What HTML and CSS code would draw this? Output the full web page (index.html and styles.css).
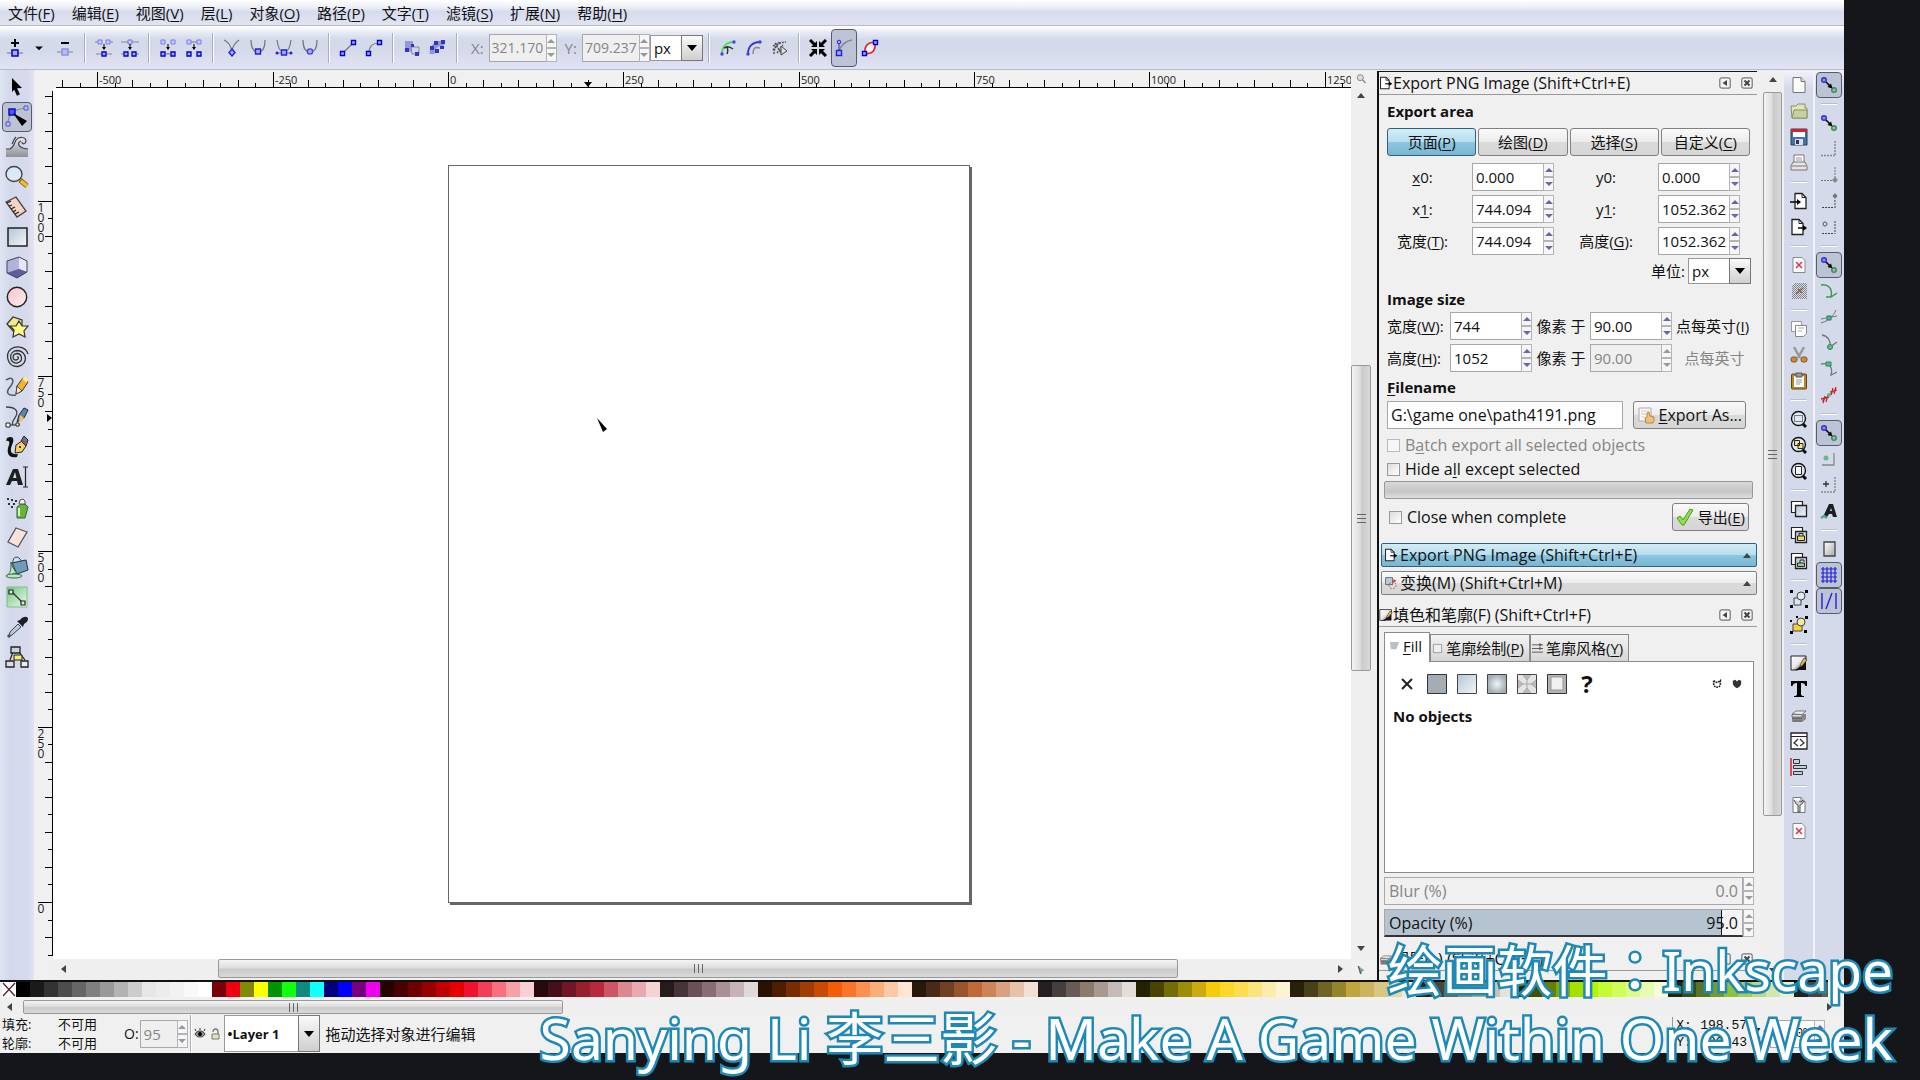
FILE: index.html
```html
<!DOCTYPE html>
<html lang="zh">
<head>
<meta charset="UTF-8" />
<meta name="viewport" content="width=device-width, initial-scale=1" />
<title>Inkscape</title>
<link rel="stylesheet" href="styles.css">
</head>
<body>

<!-- Icon sprite -->
<svg class="sprite" aria-hidden="true">
  <defs>
    <linearGradient id="steel" x1="0" y1="0" x2="1" y2="1"><stop offset="0" stop-color="#b4c6d4"/><stop offset="1" stop-color="#f2f6fa"/></linearGradient>
    <linearGradient id="pink" x1="0" y1="0" x2="1" y2="1"><stop offset="0" stop-color="#ffc0c4"/><stop offset="1" stop-color="#fff0f0"/></linearGradient>
    <linearGradient id="green" x1="0" y1="0" x2="1" y2="1"><stop offset="0" stop-color="#6fc47c"/><stop offset="1" stop-color="#effbef"/></linearGradient>
    <linearGradient id="gray" x1="0" y1="0" x2="0" y2="1"><stop offset="0" stop-color="#e4e6ea"/><stop offset="1" stop-color="#8d9197"/></linearGradient>
    <linearGradient id="ink" x1="0" y1="0" x2="1" y2="1"><stop offset="0" stop-color="#fff"/><stop offset=".5" stop-color="#e8e8e8"/><stop offset="1" stop-color="#111"/></linearGradient>
    <linearGradient id="silver" x1="0" y1="0" x2="1" y2="1"><stop offset="0" stop-color="#fff"/><stop offset="1" stop-color="#aaa"/></linearGradient>
    <radialGradient id="glow"><stop offset="0" stop-color="#f0f6f8"/><stop offset="1" stop-color="#a4adb4"/></radialGradient>
    <pattern id="dots" width="2" height="2" patternUnits="userSpaceOnUse"><path d="M0 0h1v1H0zM1 1h1v1H1z" fill="#888"/></pattern>
  </defs>

  <symbol id="i-snap" viewBox="0 0 18 18">
    <circle cx="4" cy="4" r="2.3" fill="#8e8ef0" stroke="#3030c8" stroke-width="1.4"/>
    <circle cx="14" cy="14" r="2.3" fill="#8fc0a0" stroke="#3f8a5c" stroke-width="1.4"/>
    <path d="M6 6l4 4" stroke="#000" stroke-width="1.6"/><path d="M12.500 12.500l-5-1.500 3.500-3.500z"/>
  </symbol>
  <symbol id="i-page" viewBox="0 0 18 18"><path d="M3 1.500h8l4 4v11H3z" fill="#fbfbf8" stroke="#777"/><path d="M11 1.500v4h4" fill="#ddd" stroke="#777"/></symbol>
  <symbol id="i-export" viewBox="0 0 18 18"><path d="M2 1.500h7l4 4v11H2z" fill="#fff" stroke="#222" stroke-width="1.300"/><path d="M9 1.500v4h4" fill="none" stroke="#222"/><path d="M8 10h7" stroke="#000" stroke-width="1.500"/><path d="M13 7l4 3-4 3z"/></symbol>
  <symbol id="i-import" viewBox="0 0 18 18"><path d="M5 1.500h7l4 4v11H5z" fill="#fff" stroke="#222" stroke-width="1.300"/><path d="M12 1.500v4h4" fill="none" stroke="#222"/><path d="M0 10h8" stroke="#000" stroke-width="1.500"/><path d="M7 7l4 3-4 3z"/></symbol>
  <symbol id="i-pagex" viewBox="0 0 18 18"><path d="M3 1.500h9l3 3v12H3z" fill="#fff" stroke="#888"/><path d="M6 6l6 6M12 6l-6 6" stroke="#e0354b" stroke-width="1.600"/></symbol>
  <symbol id="i-lens" viewBox="0 0 18 18"><path d="M12 13l4 4" stroke="#111" stroke-width="3"/><circle cx="8.500" cy="8.500" r="7" fill="#dfe9ef" stroke="#111" stroke-width="1.400"/></symbol>
  <symbol id="i-fill" viewBox="0 0 18 18"><path d="M1 2h15v3L8 16H1z" fill="url(#ink)" stroke="#222"/><path d="M16 3v13H4c5-1 9-6 12-13z" fill="#111"/><path d="M14 4l3 2-5 6-2 1 .5-2.500z" fill="#d8c04a" stroke="#222" stroke-width=".6"/></symbol>
  <symbol id="i-dup" viewBox="0 0 18 18"><path d="M1.500 1.500h11v11h-11z" fill="#fff" stroke="#222" stroke-width="1.200"/><path d="M5.500 5.500h11v11h-11z" fill="url(#steel)" stroke="#222" stroke-width="1.300"/></symbol>
  <symbol id="i-transform" viewBox="0 0 18 18"><path d="M2 2h9v9H2z" fill="#b9cbd8" stroke="#555"/><path d="M12 4l4 2-4 3z" fill="#d33"/><circle cx="11" cy="12" r="4.500" fill="none" stroke="#a33" stroke-dasharray="2 2"/></symbol>
  <symbol id="i-layers" viewBox="0 0 18 18"><path d="M2 11l4-3h10v5l-4 3H2z" fill="#888"/><path d="M2 8l4-3h10l-4 3.500z" fill="#eee" stroke="#777"/><path d="M2 8.500h10v2.500H2z" fill="#ddd" stroke="#777"/><path d="M2 12.500h10M3 15h9" stroke="#666"/></symbol>
  <symbol id="i-dockmin" viewBox="0 0 12 12"><rect x=".8" y=".8" width="10.400" height="10.400" rx="2" fill="#f4f4f4" stroke="#777" stroke-width="1.200"/><path d="M8 3v6L3.500 6z" fill="#444"/></symbol>
  <symbol id="i-dockclose" viewBox="0 0 12 12"><rect x=".8" y=".8" width="10.400" height="10.400" rx="2" fill="#f4f4f4" stroke="#777" stroke-width="1.200"/><path d="M3.500 3.500l5 5M8.500 3.500l-5 5" stroke="#444" stroke-width="2"/></symbol>
</svg>

<div class="app">

  <nav class="menubar">
    <a href="#">文件(<u>F</u>)</a>
    <a href="#">编辑(<u>E</u>)</a>
    <a href="#">视图(<u>V</u>)</a>
    <a href="#">层(<u>L</u>)</a>
    <a href="#">对象(<u>O</u>)</a>
    <a href="#">路径(<u>P</u>)</a>
    <a href="#">文字(<u>T</u>)</a>
    <a href="#">滤镜(<u>S</u>)</a>
    <a href="#">扩展(<u>N</u>)</a>
    <a href="#">帮助(<u>H</u>)</a>
  </nav>

  <!-- Node tool controls -->
  <div class="toolbar">
    <button class="tb" aria-label="Insert node"><svg viewBox="0 0 18 18"><path d="M9 0v8M5 4h8" stroke="#000" stroke-width="2"/><path d="M1 14h16" stroke="#777"/><path d="M6 11h6v6H6z" fill="#aaf" stroke="#00c" stroke-width="1.500"/></svg></button>
    <button class="tb narrow" aria-label="Insert options"><svg viewBox="0 0 18 18"><path d="M4 7h10l-5 5z"/></svg></button>
    <button class="tb wide" aria-label="Delete node"><svg viewBox="0 0 18 18"><path d="M5 4h8" stroke="#000" stroke-width="2"/><path d="M1 13h16" stroke="#888"/><path d="M6 10h6v6H6z" fill="#b9bdf4" stroke="#8890e8" stroke-width="1.500"/></svg></button>
    <i class="vsep"></i>
    <button class="tb" aria-label="Join nodes"><svg viewBox="0 0 18 18"><path d="M0 3h6M12 3h6M1 15h16" stroke="#888"/><path d="M3 1h4v4H3zM11 1h4v4h-4z" fill="#ccf" stroke="#77e"/><path d="M9 5v5" stroke="#000"/><path d="M7 8l2 3 2-3z"/><path d="M7 13h4v4H7z" fill="#aaf" stroke="#00c" stroke-width="1.300"/></svg></button>
    <button class="tb" aria-label="Break path"><svg viewBox="0 0 18 18"><path d="M0 3h18M0 15h5M13 15h5" stroke="#888"/><path d="M7 1h4v4H7z" fill="#ccf" stroke="#77e"/><path d="M9 5v5" stroke="#000"/><path d="M7 8l2 3 2-3z"/><path d="M3 13h4v4H3zM11 13h4v4h-4z" fill="#aaf" stroke="#00c" stroke-width="1.300"/></svg></button>
    <i class="vsep"></i>
    <button class="tb" aria-label="Join with segment"><svg viewBox="0 0 18 18"><path d="M3 15h12" stroke="#777"/><path d="M2 1h4v4H2zM12 1h4v4h-4z" fill="#ccf" stroke="#77e"/><path d="M9 5v5" stroke="#000"/><path d="M7 8l2 3 2-3z"/><path d="M2 13h4v4H2zM12 13h4v4h-4z" fill="#aaf" stroke="#00c" stroke-width="1.300"/></svg></button>
    <button class="tb" aria-label="Delete segment"><svg viewBox="0 0 18 18"><path d="M3 3h12" stroke="#777"/><path d="M2 1h4v4H2zM12 1h4v4h-4z" fill="#ccf" stroke="#77e"/><path d="M9 5v5" stroke="#000"/><path d="M7 8l2 3 2-3z"/><path d="M2 13h4v4H2zM12 13h4v4h-4z" fill="#aaf" stroke="#00c" stroke-width="1.300"/></svg></button>
    <i class="vsep"></i>
    <button class="tb" aria-label="Corner"><svg viewBox="0 0 18 18"><path d="M1 1c5 2 7 6 8 12 0-6 3-9 7-12" fill="none" stroke="#777" stroke-width="1.200"/><path d="M9 10l3 3.500-3 3.500-3-3.500z" fill="#aaf" stroke="#22d" stroke-width="1.400"/></svg></button>
    <button class="tb" aria-label="Smooth"><svg viewBox="0 0 18 18"><path d="M2 1c0 8 3 12 7 12s7-4 7-12" fill="none" stroke="#777" stroke-width="1.200"/><path d="M6.500 10h5v5h-5z" fill="#aaf" stroke="#22d" stroke-width="1.400"/></svg></button>
    <button class="tb" aria-label="Symmetric"><svg viewBox="0 0 18 18"><path d="M2 1c1 8 3 12 7 12s6-4 7-12M2 14h14" fill="none" stroke="#777" stroke-width="1.200"/><path d="M6.500 11h5v5h-5z" fill="#aaf" stroke="#22d" stroke-width="1.400"/><circle cx="2" cy="14" r="1.500" fill="#22d"/><circle cx="16" cy="14" r="1.500" fill="#22d"/></svg></button>
    <button class="tb" aria-label="Auto-smooth"><svg viewBox="0 0 18 18"><path d="M2 1c0 8 3 12 7 12s7-4 7-12" fill="none" stroke="#777" stroke-width="1.200"/><circle cx="9" cy="12.500" r="2.600" fill="#aaf" stroke="#44d" stroke-width="1.400"/></svg></button>
    <i class="vsep"></i>
    <button class="tb" aria-label="Make line"><svg viewBox="0 0 18 18"><path d="M4 14L14 4" stroke="#777" stroke-width="1.200"/><path d="M1.500 12.500h4v4h-4zM12.500 1.500h4v4h-4z" fill="#aaf" stroke="#00c" stroke-width="1.400"/></svg></button>
    <button class="tb" aria-label="Make curve"><svg viewBox="0 0 18 18"><path d="M4 14C4 7 8 4 14 4" fill="none" stroke="#777" stroke-width="1.200"/><path d="M1.500 12.500h4v4h-4zM12.500 1.500h4v4h-4z" fill="#aaf" stroke="#00c" stroke-width="1.400"/></svg></button>
    <i class="vsep"></i>
    <button class="tb" aria-label="Object to path"><svg viewBox="0 0 18 18"><path d="M2 2h8v8l-3 3-5-2z" fill="#9398da"/><path d="M8 8h8v7H9z" fill="#d0d4e8" stroke="#888"/><path d="M2 9h4v4H2zM8 5h3v3H8zM12 13h4v4h-4z" fill="#33c"/></svg></button>
    <button class="tb" aria-label="Stroke to path"><svg viewBox="0 0 18 18"><path d="M3 15C3 8 7 4 15 4" fill="none" stroke="#8f95d8" stroke-width="5"/><path d="M1 7h4v4H1zM5 2h4v4H5zM12 1h4v4h-4zM11 7h4v3h-4zM6 10h4v4H6z" fill="#33b"/></svg></button>
    <i class="vsep"></i>
    <label class="dim" for="node-x">X:</label>
    <span class="spin off"><input id="node-x" value="321.170" disabled><span class="arrows"><button disabled></button><button disabled></button></span></span>
    <label class="dim" for="node-y">Y:</label>
    <span class="spin off"><input id="node-y" value="709.237" disabled><span class="arrows"><button disabled></button><button disabled></button></span></span>
    <span class="combo unit"><select aria-label="Unit"><option>px</option></select><b></b></span>
    <i class="vsep"></i>
    <button class="tb" aria-label="Edit clip"><svg viewBox="0 0 18 18"><path d="M3 15C3 8 7 3 15 3" fill="none" stroke="#4d6" stroke-width="2"/><path d="M8 15c2-4 0-6 0-8M5 9c4-2 6-1 9 1" fill="none" stroke="#333" stroke-width="1.500"/><circle cx="3" cy="15" r="1.700" fill="#44d"/><circle cx="15" cy="3" r="1.700" fill="#44d"/></svg></button>
    <button class="tb" aria-label="Edit mask"><svg viewBox="0 0 18 18"><path d="M3 15C3 8 7 3 15 3" fill="none" stroke="#33c" stroke-width="1.800"/><path d="M8 15c0-5 1-8 7-6" fill="none" stroke="#888" stroke-width="1.500"/><circle cx="3" cy="15" r="1.700" fill="#44d"/><circle cx="15" cy="3" r="1.700" fill="#44d"/></svg></button>
    <button class="tb" aria-label="Next effect"><svg viewBox="0 0 18 18"><path d="M3 15C3 8 7 3 15 3M4 4l6 10M2 7l8-4M2 11l6-8M6 14l6-8" fill="none" stroke="#555" stroke-width="1.500" stroke-dasharray="2 1"/><path d="M10 7l6 5-6 4z" fill="#ddd" stroke="#444"/></svg></button>
    <i class="vsep"></i>
    <button class="tb" aria-label="Transform handles"><svg viewBox="0 0 18 18"><path d="M1 1l5 5M17 1l-5 5M1 17l5-5M17 17l-5-5" stroke="#000" stroke-width="3"/><path d="M8 8H2l6-6zM10 8V2l6 6zM8 10v6l-6-6zM10 10h6l-6 6z"/></svg></button>
    <button class="tb on tall" aria-label="Show handles"><svg viewBox="0 0 18 18"><path d="M4 13C5 7 10 2 17 1" fill="none" stroke="#888" stroke-width="1.500"/><path d="M4 3v10" stroke="#33d"/><circle cx="4" cy="3" r="1.800" fill="#aaf" stroke="#22d"/><path d="M1.500 11.500h5v5h-5z" fill="#aaf" stroke="#22d" stroke-width="1.500"/></svg></button>
    <button class="tb" aria-label="Show outline"><svg viewBox="0 0 18 18"><path d="M4 14C3 7 8 2 14 4c1 7-3 12-10 10z" fill="#fdf3f3" stroke="#d22" stroke-width="1.600"/><path d="M1.500 12.500h4v4h-4zM12.500 1.500h4v4h-4z" fill="#aaf" stroke="#00c" stroke-width="1.400"/></svg></button>
  </div>

  <div class="main">

    <div class="toolbox">
      <button aria-label="Select"><svg viewBox="0 0 24 24"><path d="M7 3l10 10-5 .3 3 6-3 1.500-2.800-6L7 17z"/></svg></button>
      <button class="on" aria-label="Node"><svg viewBox="0 0 24 24"><path d="M3 19C3 9 8 5 20 3" fill="none" stroke="#888" stroke-width="1.200"/><path d="M1 17h4v4H1zM19 1h4v4h-4z" fill="#bbf" stroke="#55c"/><path d="M4 4h6v6H4z" fill="#55f" stroke="#11b" stroke-width="1.500"/><path d="M8 8l14 8-5 5z"/></svg></button>
      <button aria-label="Tweak"><svg viewBox="0 0 24 24"><path d="M1 14h5c4-2 5-6 6-9 3-4 9-2 9 2 0 3-4 3-4 0-3 0-4 6 6 7v8H1z" fill="url(#gray)" stroke="none"/><path d="M1 14h4c4-2 4-5 6-9 3-4 10-3 10 1 0 3-4 4-4 1M16 6c-4 1-4 7 7 8M7 9c2-3 1-4 4-7" fill="none" stroke="#444" stroke-width="1.200"/></svg></button>
      <button aria-label="Zoom"><svg viewBox="0 0 24 24"><path d="M15 15l7 6" stroke="#8a6a10" stroke-width="5"/><path d="M16 16l6 5" stroke="#f0bb35" stroke-width="3.500"/><ellipse cx="9" cy="9" rx="8" ry="7.500" fill="#dbe9f6" stroke="#444" stroke-width="1.400"/></svg></button>
      <button aria-label="Measure"><svg viewBox="0 0 24 24"><path d="M1 7l10-5 10 14-9 6z" fill="#f6d3c3" stroke="#444" stroke-width="1.300"/><path d="M2 8l4-2M4 11l3-1M6 14l4-2M8 17l3-2M10 19l4-2" stroke="#222" stroke-width="1.300"/></svg></button>
      <button aria-label="Rectangle"><svg viewBox="0 0 24 24"><path d="M3 3h19v18H3z" fill="url(#steel)" stroke="#222" stroke-width="1.500"/></svg></button>
      <button aria-label="3D box"><svg viewBox="0 0 24 24"><path d="M2 6l12-4 8 4v11l-10 6L2 18z" fill="#8686bc"/><path d="M2 6l12-4v12L2 18z" fill="#b2b2dc"/><path d="M14 2l8 4v11l-8-3z" fill="#e6e6f8"/><path d="M2 18l12-4 8 3-10 6z" fill="#5e5e98"/><path d="M2 6l12-4 8 4v11l-10 6L2 18z" fill="none" stroke="#445"/></svg></button>
      <button aria-label="Ellipse"><svg viewBox="0 0 24 24"><circle cx="12" cy="12" r="9.700" fill="url(#pink)" stroke="#222" stroke-width="1.400"/></svg></button>
      <button aria-label="Star"><svg viewBox="0 0 24 24"><path d="M2 9l6-7 9 3v9l-8 3z" fill="#f2ea8a" stroke="#333" stroke-width="1.200"/><path d="M14 6l3 5h6l-4 5 1 6-6-3-6 3 1-7-4-4h6z" fill="#fdf78c" stroke="#333" stroke-width="1.200"/></svg></button>
      <button aria-label="Spiral"><svg viewBox="0 0 24 24"><path d="M12 12c2-1 2 3-1 3-4 0-4-6 1-6.500 5 0 7 8 0 9.500-8 1-9-12 0-12.500 10 0 12 14 1 16C2 22 0 9 6 4c6-4 15-2 17 5" fill="none" stroke="#333" stroke-width="1.300"/></svg></button>
      <button aria-label="Pencil"><svg viewBox="0 0 24 24"><path d="M1 5c7-5 9 1 4 7s-2 9 6 8" fill="none" stroke="#555" stroke-width="1.500"/><path d="M11 19l1-8 6-8 5 4-6 9z" fill="#f5b22e" stroke="#333"/><path d="M11 19l1-8 5 5z" fill="#fbe6b8" stroke="#333" stroke-width=".8"/><path d="M17 4l5 4 1-4-3-2z" fill="#fff07a"/></svg></button>
      <button aria-label="Bezier"><svg viewBox="0 0 24 24"><path d="M1 2c8 0 13 3 10 9-2 4-5 6-3 9" fill="none" stroke="#444" stroke-width="1.300"/><path d="M3 20h12" stroke="#222"/><path d="M1 18h4v4H1zM11 18h3v3h-3z" fill="#fff" stroke="#222"/><path d="M12 17l2-7 5-7 4 2-4 8z" fill="#5a87a5" stroke="#223"/><path d="M15 10l4 3-2 3-3 1z" fill="#f1c255"/></svg></button>
      <button aria-label="Calligraphy"><svg viewBox="0 0 24 24"><path d="M2 3c6-3 8 1 5 7-3 7 0 10 6 9l-1 3C3 24 1 17 4 10c1-3 0-5-3-4z" fill="#111"/><path d="M10 18l1-8 6-4 4 5-4 6z" fill="#f8cf60" stroke="#222"/><path d="M16 6l3-5 4 4-2 6z" fill="#4d7f9e" stroke="#222"/><path d="M17 5l5 4" stroke="#c33" stroke-width="1.500"/><circle cx="15" cy="12" r="1"/></svg></button>
      <button aria-label="Text"><svg viewBox="0 0 24 24"><path d="M1 20L8 4h5l5 16h-5l-1-4H7l-2 4zM8 13h3.500L10 7z" fill="#1b1f24"/><path d="M18 2h5M18 22h5M20.500 2v20" stroke="#222" stroke-width="1.200"/></svg></button>
      <button aria-label="Spray"><svg viewBox="0 0 24 24"><path d="M2 3h2v2H2zM6 4h2v2H6zM3 8h2v2H3zM8 8h2v2H8zM6 11h2v2H6zM10 5h2v2h-2z" fill="#333"/><path d="M12 12l4-3h4l3 3-3 11H12z" fill="#68b33a" stroke="#363"/><path d="M14 9l1-4 3-1 2 2v3z" fill="#eee" stroke="#555"/><path d="M14 13v8" stroke="#d9f5b8" stroke-width="2"/></svg></button>
      <button aria-label="Eraser"><svg viewBox="0 0 24 24"><path d="M11 3l11 4-9 15-10-5z" fill="#f8e2da" stroke="#555" stroke-width="1.300"/></svg></button>
      <button aria-label="Bucket"><svg viewBox="0 0 24 24"><path d="M7 8l14-3 2 10-11 4z" fill="#6f9cb6" stroke="#234"/><path d="M6 7c1 5 4 9 6 12-5-2-5 1-5 2H1c5-3 5-6 5-14z" fill="#bde8c8" stroke="#3a6a4a"/><ellipse cx="9" cy="21" rx="8" ry="2" fill="#bde8c8" stroke="#3a6a4a"/><path d="M8 8c-1-7 6-8 8-2" fill="none" stroke="#345"/></svg></button>
      <button aria-label="Gradient"><svg viewBox="0 0 24 24"><path d="M2 2h20v20H2z" fill="url(#green)" stroke="#7fbf88"/><path d="M7 7l11 11" stroke="#333" stroke-width="1.200"/><path d="M4 5h4v4H4zM16 16h4v4h-4z" fill="#d4f0d8" stroke="#222" stroke-width="1.200"/></svg></button>
      <button aria-label="Dropper"><svg viewBox="0 0 24 24"><path d="M15 5c3-4 8-4 8-1 0 2-2 4-4 5l-1 3-6-6z" fill="#1b1f24"/><path d="M13 9l3 3-9 8-3 1 1-4z" fill="#b8cbd8" stroke="#445"/><circle cx="4" cy="21" r="1.700" fill="#456"/></svg></button>
      <button aria-label="Connector"><svg viewBox="0 0 24 24"><path d="M8 7l-3 8M14 7l6 8" stroke="#222" stroke-width="1.200"/><path d="M6 2h9v6H6zM1 16h8v6H1zM16 16h7v6h-7z" fill="url(#steel)" stroke="#222" stroke-width="1.300"/><path d="M9 10h8v5H9z" fill="#f5ee6a" stroke="#222"/></svg></button>
    </div>

    <div class="workspace">
      <div class="ruler-corner"></div>
      <svg class="ruler-h" id="ruler-h"></svg>
      <div class="gutter"><svg viewBox="0 0 18 18"><circle cx="8" cy="7" r="4.500" fill="#ddd" stroke="#888" stroke-width="1.500"/><path d="M11 10l5 5" stroke="#888" stroke-width="2"/></svg></div>

      <svg class="ruler-v" id="ruler-v"></svg>
      <div class="canvas">
        <div class="page"></div>
        <svg class="pointer" viewBox="0 0 12 16"><path d="M0 0l10 11-4 3z"/></svg>
      </div>
      <div class="scroll-v canvas-scroll-v"><i class="up"></i><div class="track"><div class="thumb"><s></s></div></div><i class="down"></i></div>

      <div></div>
      <div class="scroll-h canvas-scroll-h"><i class="left"></i><div class="track"><div class="thumb"><s></s></div></div><i class="right"></i></div>
      <div class="gutter"><svg viewBox="0 0 18 18"><path d="M5 3l9 6-7 6z" fill="#aaa"/><path d="M5 3l4 12" stroke="#465" stroke-width="2"/><path d="M8 6l4 3-3 4z" fill="#6a9"/></svg></div>
    </div>

    <div class="dock">
      <div class="dock-title"><svg><use href="#i-export"/></svg><span>Export PNG Image (Shift+Ctrl+E)</span>
        <button aria-label="Iconify"><svg><use href="#i-dockmin"/></svg></button><button aria-label="Close"><svg><use href="#i-dockclose"/></svg></button></div>

      <form class="export">
        <h2>Export area</h2>
        <div class="area-buttons">
          <button type="button" class="active">页面(<u>P</u>)</button>
          <button type="button">绘图(<u>D</u>)</button>
          <button type="button">选择(<u>S</u>)</button>
          <button type="button">自定义(<u>C</u>)</button>
        </div>
        <div class="area-grid">
          <label for="x0"><u>x</u>0:</label>
          <span class="spin"><input id="x0" value="0.000"><span class="arrows"><button type="button"></button><button type="button"></button></span></span>
          <label for="y0">y0:</label>
          <span class="spin"><input id="y0" value="0.000"><span class="arrows"><button type="button"></button><button type="button"></button></span></span>
          <label for="x1">x<u>1</u>:</label>
          <span class="spin"><input id="x1" value="744.094"><span class="arrows"><button type="button"></button><button type="button"></button></span></span>
          <label for="y1">y<u>1</u>:</label>
          <span class="spin"><input id="y1" value="1052.362"><span class="arrows"><button type="button"></button><button type="button"></button></span></span>
          <label for="aw">宽度(<u>T</u>):</label>
          <span class="spin"><input id="aw" value="744.094"><span class="arrows"><button type="button"></button><button type="button"></button></span></span>
          <label for="ah">高度(<u>G</u>):</label>
          <span class="spin"><input id="ah" value="1052.362"><span class="arrows"><button type="button"></button><button type="button"></button></span></span>
        </div>
        <div class="unit-row"><label for="unit">单位:</label><span class="combo"><select id="unit"><option>px</option></select><b></b></span></div>

        <h2>Image size</h2>
        <div class="size-grid">
          <label for="iw">宽度(<u>W</u>):</label>
          <span class="spin"><input id="iw" value="744"><span class="arrows"><button type="button"></button><button type="button"></button></span></span>
          <label for="dpix">像素 于</label>
          <span class="spin"><input id="dpix" value="90.00"><span class="arrows"><button type="button"></button><button type="button"></button></span></span>
          <span>点每英寸(<u>I</u>)</span>
          <label for="ih">高度(<u>H</u>):</label>
          <span class="spin"><input id="ih" value="1052"><span class="arrows"><button type="button"></button><button type="button"></button></span></span>
          <label for="dpiy">像素 于</label>
          <span class="spin off"><input id="dpiy" value="90.00" disabled><span class="arrows"><button type="button" disabled></button><button type="button" disabled></button></span></span>
          <span class="dim">点每英寸</span>
        </div>

        <h2><label for="filename"><u>F</u>ilename</label></h2>
        <div class="file-row">
          <input id="filename" class="entry" value="G:\game one\path4191.png">
          <button type="button" class="btn latin"><svg viewBox="0 0 18 18"><path d="M2 2h12v13H2z" fill="#fafafa" stroke="#aaa"/><path d="M4 5h8M4 8h6M4 11h4" stroke="#ccc"/><path d="M9 17l-1-5 2-1V7l2-1 1 4 4 1v4l-1 2z" fill="#eec07c" stroke="#b8873c"/></svg><span><u>E</u>xport As...</span></button>
        </div>
        <label class="check dim"><input type="checkbox" disabled><span>B<u>a</u>tch export all selected objects</span></label>
        <label class="check"><input type="checkbox"><span>Hide a<u>l</u>l except selected</span></label>
        <div class="progress"></div>
        <div class="finish-row">
          <label class="check"><input type="checkbox"><span>Close when complete</span></label>
          <button type="button" class="btn"><svg viewBox="0 0 18 18"><path d="M1 10l3-2 3 4L14 1l3 1L8 17H6z" fill="#8ee04c" stroke="#4d9c22"/></svg><span>导出(<u>E</u>)</span></button>
        </div>
      </form>

      <div class="dock-tabs">
        <button class="active"><svg><use href="#i-export"/></svg><span>Export PNG Image (Shift+Ctrl+E)</span><i class="up"></i></button>
        <button><svg><use href="#i-transform"/></svg><span>变换(M) (Shift+Ctrl+M)</span><i class="up"></i></button>
      </div>

      <div class="dock-title second"><svg><use href="#i-fill"/></svg><span>填色和笔廓(F) (Shift+Ctrl+F)</span>
        <button aria-label="Iconify"><svg><use href="#i-dockmin"/></svg></button><button aria-label="Close"><svg><use href="#i-dockclose"/></svg></button></div>

      <div class="fill-stroke">
        <div class="tabs">
          <button class="current"><svg viewBox="0 0 12 12"><path d="M1 1h10L8 9H2z" fill="#b9bfc4"/></svg><span><u>F</u>ill</span></button>
          <button><svg viewBox="0 0 12 12"><path d="M1.500 1.500h9v9h-9z" fill="#eee" stroke="#999"/></svg><span>笔廓绘制(<u>P</u>)</span></button>
          <button><svg viewBox="0 0 12 12"><path d="M0 2h12M0 6h12M0 10h12" stroke="#555"/><path d="M8 0l3 2-3 2zM8 4l3 2-3 2z" fill="#555"/></svg><span>笔廓风格(<u>Y</u>)</span></button>
        </div>
        <div class="tab-page">
          <div class="paint-row">
            <button aria-label="No paint"><svg viewBox="0 0 20 20"><path d="M5 5l10 10M15 5L5 15" stroke="#222" stroke-width="2"/></svg></button>
            <button aria-label="Flat color"><svg viewBox="0 0 20 20"><path d="M.5.5h19v19H.5z" fill="#a3adb5" stroke="#333"/></svg></button>
            <button aria-label="Linear gradient"><svg viewBox="0 0 20 20"><path d="M.5.5h19v19H.5z" fill="url(#steel)" stroke="#444"/></svg></button>
            <button aria-label="Radial gradient"><svg viewBox="0 0 20 20"><path d="M.5.5h19v19H.5z" fill="url(#glow)" stroke="#444"/></svg></button>
            <button aria-label="Pattern"><svg viewBox="0 0 20 20"><path d="M.5.5h19v19H.5z" fill="#e4e4e4" stroke="#444"/><path d="M6 1l4 5 4-5M6 19l4-5 4 5M1 6l5 4-5 4M19 6l-5 4 5 4M6 10h8M10 6v8" fill="#bbb" stroke="#aaa"/></svg></button>
            <button aria-label="Swatch"><svg viewBox="0 0 20 20"><path d="M.5.5h19v19H.5z" fill="#b0b4b8" stroke="#333"/><path d="M4 3h12v13H4z" fill="#f0f0f0" stroke="#999"/></svg></button>
            <button class="unknown" aria-label="Unknown paint">?</button>
            <button class="rule" aria-label="Even-odd"><svg viewBox="0 0 12 12"><path d="M2 2l3 2h2l3-2v4c0 5-8 5-8 0z" fill="#fff" stroke="#222" stroke-width="2" stroke-dasharray="2 1"/></svg></button>
            <button class="rule" aria-label="Nonzero"><svg viewBox="0 0 12 12"><path d="M1 2l3-1 2 2 2-2 3 1v4c-1 3-3 4-5 5-2-1-4-2-5-5z" fill="#333"/></svg></button>
          </div>
          <h2>No objects</h2>
        </div>
        <div class="scale dim"><div class="bar"><label for="blur">Blur (%)</label><input id="blur" value="0.0" disabled></div><span class="arrows"><button disabled></button><button disabled></button></span></div>
        <div class="scale"><div class="bar filled"><label for="opacity">Opacity (%)</label><input id="opacity" value="95.0"></div><span class="arrows off"><button></button><button></button></span></div>
      </div>

      <div class="dock-title third"><svg><use href="#i-layers"/></svg><span>图层(L) (Shift+Ctrl+L)</span>
        <button aria-label="Iconify"><svg><use href="#i-dockmin"/></svg></button><button aria-label="Close"><svg><use href="#i-dockclose"/></svg></button></div>
    </div>

    <div class="scroll-v dock-scroll"><i class="up"></i><div class="track"><div class="thumb"><s></s></div></div><i class="down"></i></div>

    <!-- Commands bar -->
    <div class="iconbar commands">
      <button aria-label="New"><svg><use href="#i-page"/></svg></button>
      <button aria-label="Open"><svg viewBox="0 0 18 18"><path d="M1 4h5l2-2h7v4h2v10H2z" fill="#dfe5b8" stroke="#8a8f66"/><path d="M2 16l2-8h13v8z" fill="#c8d09c" stroke="#8a8f66"/></svg></button>
      <button aria-label="Save"><svg viewBox="0 0 18 18"><path d="M1 1h16v16H1z" fill="#4573a4" stroke="#245"/><path d="M3 1h12v8H3z" fill="#fff"/><path d="M1 1h16v3H1z" fill="#d8202c"/><path d="M5 11h8v6H5z" fill="#dde"/><path d="M6 12h3v4H6z" fill="#335"/></svg></button>
      <button aria-label="Print"><svg viewBox="0 0 18 18"><path d="M4 1h10v8H4z" fill="#fff" stroke="#777"/><path d="M6 4h6M6 6h6" stroke="#999"/><path d="M3 8h12l2 4v4H1v-4z" fill="#e4e4e4" stroke="#777"/><path d="M2 12h14" stroke="#777"/></svg></button>
      <i class="hsep"></i>
      <button aria-label="Import"><svg><use href="#i-import"/></svg></button>
      <button aria-label="Export"><svg><use href="#i-export"/></svg></button>
      <i class="hsep"></i>
      <button aria-label="Undo"><svg><use href="#i-pagex"/></svg></button>
      <button aria-label="Redo"><svg viewBox="0 0 18 18"><path d="M2 4l3-3h12v16H2z" fill="url(#dots)"/><path d="M6 12l7-6M8 7l4 4" stroke="#865" stroke-width="1.500"/></svg></button>
      <i class="hsep"></i>
      <button aria-label="Copy"><svg viewBox="0 0 18 18"><path d="M1.500 1.500h10v10h-10z" fill="#fafafa" stroke="#999"/><path d="M5.500 5.500h11v8l-3 3h-8z" fill="#fff" stroke="#888"/><path d="M8 8h6M8 11h4" stroke="#aaa"/></svg></button>
      <button aria-label="Cut"><svg viewBox="0 0 18 18"><path d="M4 1l6 11M14 1L8 12" stroke="#999" stroke-width="2.500"/><rect x="1" y="11" width="6" height="5" rx="2" fill="#d98b1f" stroke="#754"/><rect x="11" y="11" width="6" height="5" rx="2" fill="#d98b1f" stroke="#754"/></svg></button>
      <button aria-label="Paste"><svg viewBox="0 0 18 18"><rect x="1.500" y="2" width="15" height="15" rx="1" fill="#b9852c" stroke="#64480f"/><path d="M4 4h10v11H4z" fill="#fff"/><path d="M6 1h6v4H6z" fill="#999" stroke="#555"/><path d="M6 8h6M6 10h6M6 12h4" stroke="#999"/></svg></button>
      <i class="hsep"></i>
      <button aria-label="Zoom selection"><svg viewBox="0 0 18 18"><use href="#i-lens"/><path d="M4.500 5.500h8v6h-8z" fill="none" stroke="#111" stroke-dasharray="1 1"/></svg></button>
      <button aria-label="Zoom drawing"><svg viewBox="0 0 18 18"><use href="#i-lens"/><path d="M4.500 4.500h5v5h-5zM8 7.500h5v5H8z" fill="#f2e68a" stroke="#222"/></svg></button>
      <button aria-label="Zoom page"><svg viewBox="0 0 18 18"><use href="#i-lens"/><path d="M5.500 4.500h6v8h-6z" fill="#fff" stroke="#222"/></svg></button>
      <i class="hsep"></i>
      <button aria-label="Duplicate"><svg><use href="#i-dup"/></svg></button>
      <button aria-label="Clone"><svg viewBox="0 0 18 18"><use href="#i-dup"/><path d="M7.500 10h7v4.500h-7z" fill="#f5d95a" stroke="#222"/><path d="M9 10V7.500h4V10" fill="none" stroke="#222"/></svg></button>
      <button aria-label="Unlink clone"><svg viewBox="0 0 18 18"><use href="#i-dup"/><path d="M7.500 11h7v3.500h-7z" fill="#9c9" stroke="#222"/><path d="M10 11V8h4v2" fill="none" stroke="#222"/></svg></button>
      <i class="hsep"></i>
      <button aria-label="Group"><svg viewBox="0 0 18 18"><path d="M4 8h7v7H4z" fill="#dde6ee" stroke="#444"/><circle cx="11" cy="6" r="4" fill="#e4ecf2" stroke="#444"/><path d="M0 0h3v3H0zM15 0h3v3h-3zM0 15h3v3H0zM15 15h3v3h-3z"/></svg></button>
      <button aria-label="Ungroup"><svg viewBox="0 0 18 18"><path d="M3 8h9v7H3z" fill="#f5d23c" stroke="#444"/><circle cx="11" cy="6" r="4" fill="#f4e9a0" stroke="#444"/><path d="M0 4h2v2H0zM6 0h2v2H6zM15 0h3v3h-3zM0 15h3v3H0zM14 14h3v3h-3z"/></svg></button>
      <i class="hsep"></i>
      <button aria-label="Fill and stroke"><svg><use href="#i-fill"/></svg></button>
      <button aria-label="Text and font"><svg viewBox="0 0 18 18"><path d="M1 1h16v5h-1.500C15 4 14 3 11 3v11c0 1.500 1 2 3 2v1H4v-1c2 0 3-.5 3-2V3C4 3 3 4 2.500 6H1z"/></svg></button>
      <button aria-label="Layers"><svg><use href="#i-layers"/></svg></button>
      <button aria-label="XML editor"><svg viewBox="0 0 18 18"><path d="M1 1h16v16H1z" fill="#fff" stroke="#222" stroke-width="1.300"/><path d="M1 4.500h16" stroke="#222"/><path d="M8 7l-4 4 4 3M10 7l4 4-4 3" fill="none" stroke="#333" stroke-width="1.300"/></svg></button>
      <button aria-label="Align"><svg viewBox="0 0 18 18"><path d="M1 0v18" stroke="#d22" stroke-width="1.500"/><path d="M3.500 1.500h6v4h-6zM3.500 7.500h13v3h-13zM3.500 13.500h9v3h-9z" fill="#c4d2dc" stroke="#333"/></svg></button>
      <i class="hsep"></i>
      <button aria-label="Preferences"><svg viewBox="0 0 18 18"><use href="#i-page"/><path d="M4 4l2 4 2 1v7h2V9l3-2V4l-2 2-2-1" fill="#ccc" stroke="#555"/></svg></button>
      <button aria-label="Document properties"><svg><use href="#i-pagex"/></svg></button>
    </div>

    <!-- Snap bar -->
    <div class="iconbar snaps">
      <button class="on" aria-label="Enable snapping"><svg><use href="#i-snap"/></svg></button>
      <i class="hsep"></i>
      <button aria-label="Snap bounding boxes"><svg><use href="#i-snap"/></svg></button>
      <button aria-label="Snap edges"><svg viewBox="0 0 18 18"><path d="M15 1v14M15 15.500H0" fill="none" stroke="#888" stroke-width="1.500" stroke-dasharray="2 1"/></svg></button>
      <button aria-label="Snap corners"><svg viewBox="0 0 18 18"><path d="M15 1v12M12 14.500H0" fill="none" stroke="#777" stroke-dasharray="2 1"/><path d="M15 11l3 3-3 3-3-3z" fill="#888"/></svg></button>
      <button aria-label="Snap edge midpoints"><svg viewBox="0 0 18 18"><path d="M15 8v8M13 15.500H1" fill="none" stroke="#444" stroke-dasharray="2 1"/><path d="M15 1l2.500 3L15 7l-2.500-3z" fill="#777"/></svg></button>
      <button aria-label="Snap centers"><svg viewBox="0 0 18 18"><path d="M15 3v13M13 15.500H1" fill="none" stroke="#444" stroke-dasharray="2 1"/><circle cx="5" cy="6" r="2" fill="none" stroke="#555"/></svg></button>
      <i class="hsep"></i>
      <button class="on" aria-label="Snap nodes"><svg><use href="#i-snap"/></svg></button>
      <button aria-label="Snap to paths"><svg viewBox="0 0 18 18"><path d="M1 3c7-1 12 3 10 12M6 15h5l6-4" fill="none" stroke="#3a9c44" stroke-width="1.500"/></svg></button>
      <button aria-label="Snap intersections"><svg viewBox="0 0 18 18"><path d="M1 15C8 13 13 9 16 2M1 11l16-3" fill="none" stroke="#777"/><path d="M7 8h4v4H7z" fill="#5b9" stroke="#275"/></svg></button>
      <button aria-label="Snap cusp nodes"><svg viewBox="0 0 18 18"><path d="M2 1c6 1 9 6 8 12l7-5" fill="none" stroke="#777" stroke-width="1.300"/><circle cx="10" cy="13" r="2.500" fill="#6b8" stroke="#285"/></svg></button>
      <button aria-label="Snap smooth nodes"><svg viewBox="0 0 18 18"><path d="M1 4c9-2 12 4 10 11l6-3" fill="none" stroke="#777" stroke-width="1.300"/><path d="M6 2h5v4H6z" fill="#6b8" stroke="#285"/></svg></button>
      <button aria-label="Snap line midpoints"><svg viewBox="0 0 18 18"><path d="M2 15L16 3" stroke="#777"/><path d="M3 17l2-7M6 16l2-7M11 9l2-7M14 8l2-7M1 13l8-2M10 6l7-2" stroke="#c22" stroke-width="1.300"/><circle cx="9" cy="9" r="2" fill="#5b8"/></svg></button>
      <i class="hsep"></i>
      <button class="on" aria-label="Snap others"><svg><use href="#i-snap"/></svg></button>
      <button aria-label="Snap object midpoints"><svg viewBox="0 0 18 18"><path d="M14 3v12H2" fill="none" stroke="#888" stroke-width="1.300"/><circle cx="6" cy="8" r="2.500" fill="#6b8"/></svg></button>
      <button aria-label="Snap rotation centers"><svg viewBox="0 0 18 18"><path d="M15 1v15H1" fill="none" stroke="#666" stroke-dasharray="2 1"/><path d="M3 8h6M6 5v6" stroke="#333" stroke-width="1.300"/></svg></button>
      <button aria-label="Snap text baseline"><svg viewBox="0 0 18 18"><path d="M3 15L9 2h4l4 13h-4l-1-3H9l-2 3zM10 9h2l-1-3z" fill="#1b1f24"/><path d="M1 16l3-2 3 2" stroke="#4a8" stroke-width="2.500" fill="none"/></svg></button>
      <i class="hsep"></i>
      <button aria-label="Snap page border"><svg viewBox="0 0 18 18"><path d="M4 2h11v14H4z" fill="url(#silver)" stroke="#444" stroke-width="1.300"/></svg></button>
      <button class="on" aria-label="Snap grids"><svg viewBox="0 0 18 18"><path d="M3 1v16M7 1v16M11 1v16M15 1v16M1 3h16M1 7h16M1 11h16M1 15h16" stroke="#22d" stroke-width="1.200"/></svg></button>
      <button class="on" aria-label="Snap guides"><svg viewBox="0 0 18 18"><path d="M2 1v16M16 1v16M12 1L6 17" stroke="#22d" stroke-width="1.400"/></svg></button>
    </div>
  </div>

  <div class="palette" id="palette">
    <button class="none" aria-label="None"><svg viewBox="0 0 14 15"><path d="M0 0h14v15H0z" fill="#fff"/><path d="M1 1l12 13M13 1L1 14" stroke="#602030" stroke-width="1.300"/></svg></button>
  </div>
  <div class="scroll-h palette-scroll"><i class="left"></i><div class="track"><div class="thumb"><s></s></div></div><i class="right"></i></div>

  <footer class="status">
    <div class="style-grid"><span>填充:</span><span>不可用</span><span>轮廓:</span><span>不可用</span></div>
    <label for="op">O:</label>
    <span class="spin off"><input id="op" value="95" disabled><span class="arrows"><button disabled></button><button disabled></button></span></span>
    <i class="vsep"></i>
    <button class="mini" aria-label="Layer visibility"><svg viewBox="0 0 12 12"><path d="M1 6c2-4 8-4 10 0-2 4-8 4-10 0z" fill="#999" stroke="#333"/><circle cx="6" cy="6" r="2"/><path d="M2 3L1 1M6 2V0M10 3l1-2" stroke="#333"/></svg></button>
    <button class="mini" aria-label="Layer lock"><svg viewBox="0 0 12 12"><path d="M3 6h7v5H3z" fill="#e8e2b8" stroke="#777"/><path d="M4 4c0-4 5-4 5 0v2" fill="none" stroke="#777" stroke-width="1.300"/></svg></button>
    <span class="combo layer"><select aria-label="Layer"><option>•Layer 1</option></select><b></b></span>
    <span class="message">拖动选择对象进行编辑</span>
    <div class="coords"><span>X:</span><span>198.57</span><span>Y:</span><span>680.43</span></div>
    <label class="zoom-label" for="zoom">Z:</label>
    <span class="spin zoom"><input id="zoom" value="70%"><span class="arrows"><button></button><button></button></span></span>
  </footer>
</div>

<div class="captions">
  <p class="software">绘画软件<span class="colon" lang="zh-TW">：</span>Inkscape</p>
  <p>Sanying Li 李三影 - Make A Game Within One Week</p>
</div>

<script src="script.js"></script>
</body>
</html>
```

FILE: styles.css
```css
* { box-sizing: border-box; }
body {
  margin: 0;
  height: 100vh;
  padding: 0 76px 27px 0;
  background: #151619;
  color: #111;
  font: 15px/20px "Open Sans", "Noto Sans CJK SC", sans-serif;
  overflow: hidden;
}
button, input, select { font: inherit; color: inherit; margin: 0; }
button { padding: 0; border: 0; background: none; }
h2 { margin: 0; font-size: 15px; line-height: 20px; font-weight: 700; }
u { text-underline-offset: 2px; }
svg { display: block; flex: none; }
.sprite { position: absolute; width: 0; height: 0; }
.dim { color: #858585; }
.app {
  height: 100%;
  display: flex;
  flex-direction: column;
  background: #f0f0f0;
}

/* menu + toolbar */
.menubar {
  height: 26px;
  padding: 0 8px;
  display: flex;
  align-items: center;
  gap: 17px;
  background: linear-gradient(#fff, #eceef7 30%, #d7dcec 45%, #dfe3f2);
  border-bottom: 1px solid #b4bccb;
}
.menubar a { color: #111; text-decoration: none; }
.toolbar {
  height: 44px;
  padding: 0 2px;
  display: flex;
  align-items: center;
  background: linear-gradient(#fff, #e8ebf6 15%, #d5daeb 30%, #d5daeb 60%, #e2e3f3);
  border-bottom: 1px solid #b4bccb;
}
.tb {
  width: 26px;
  height: 26px;
  display: flex;
  align-items: center;
  justify-content: center;
}
.tb svg { width: 18px; height: 18px; }
.tb.narrow { width: 22px; }
.tb.narrow svg { width: 14px; }
.tb.wide { width: 29px; }
.tb.tall { height: 38px; }
.on {
  border: 1px solid #555d6b;
  border-radius: 4px;
  background: #bcc3d4;
}
.vsep {
  width: 2px;
  height: 30px;
  margin: 0 5px;
  border-left: 1px solid #a9afbd;
  border-right: 1px solid #fff;
}
.toolbar label { margin: 0 5px 0 8px; }

/* spin boxes */
.spin { display: flex; height: 28px; }
.spin input {
  width: 100%;
  min-width: 0;
  padding: 0 3px;
  border: 1px solid #a8a8a8;
  border-right: 0;
  background: #fff;
}
.spin.off input { background: #efefef; color: #858585; }
.toolbar .spin { width: 68px; }
.toolbar .spin input { padding: 0 2px; font-size: 14px; }
.arrows {
  flex: none;
  width: 11px;
  display: flex;
  flex-direction: column;
}
.arrows button {
  flex: 1;
  display: flex;
  align-items: center;
  justify-content: center;
  border: 1px solid #b4b4b4;
  background: #f6f6f8;
}
.arrows button::before {
  content: "";
  border: 4px solid transparent;
  border-top: 0;
  border-bottom: 4px solid #6868a8;
}
.arrows button:last-child::before { border-top: 4px solid #6868a8; border-bottom: 0; }
.off button::before, .dim .arrows button::before { border-bottom-color: #999; }
.off button:last-child::before, .dim .arrows button:last-child::before { border-top-color: #999; }

/* combo boxes */
.combo { position: relative; display: flex; width: 63px; height: 26px; }
.combo select {
  width: 100%;
  padding: 0 3px;
  appearance: none;
  border: 1px solid #999;
  border-radius: 0;
  background: #fff;
}
.combo b {
  position: absolute;
  top: 0;
  right: 0;
  bottom: 0;
  width: 22px;
  display: flex;
  align-items: center;
  justify-content: center;
  border: 1px solid #777;
  background: linear-gradient(#fafafa, #e4e4e4 50%, #cfcfcf);
  pointer-events: none;
}
.combo b::before { content: ""; border: 5px solid transparent; border-top: 6px solid #000; border-bottom: 0; }
.combo.unit { width: 53px; }

/* main area */
.main { flex: 1; min-height: 0; display: flex; }
.toolbox {
  width: 34px;
  padding: 2px 2px 0;
  background: linear-gradient(90deg, #dfe4f2, #d3d9eb 30%, #d6daec 80%, #e4e2f2);
}
.toolbox button {
  width: 30px;
  height: 30px;
  display: flex;
  align-items: center;
  justify-content: center;
}
.toolbox svg { width: 24px; height: 24px; }

.workspace {
  flex: 1;
  min-width: 0;
  display: grid;
  grid-template-columns: 19px 1fr 20px;
  grid-template-rows: 18px 1fr 21px;
  padding-right: 6px;
}
.ruler-h, .ruler-v { width: 100%; height: 100%; overflow: hidden; }
.ruler-h text, .ruler-v text { font: 12px "Open Sans", sans-serif; fill: #222; }
.ruler-h text { font-size: 11px; }
.ruler-v text { text-anchor: middle; }
.gutter { display: flex; align-items: center; justify-content: center; }
.gutter svg { width: 12px; height: 12px; }
.canvas { position: relative; overflow: hidden; background: #fff; }
.page {
  position: absolute;
  left: 395px;
  top: 77px;
  width: 522px;
  height: 738px;
  border: 1px solid #666;
  box-shadow: 2px 2px 0 #666;
}
.pointer { position: absolute; left: 544px; top: 330px; width: 12px; height: 16px; }

/* scrollbars */
.up, .down, .left, .right { flex: none; width: 0; height: 0; border: 4px solid transparent; }
.up { border-top: 0; border-bottom: 5px solid #444; }
.down { border-bottom: 0; border-top: 5px solid #444; }
.left { border-left: 0; border-right: 5px solid #444; }
.right { border-right: 0; border-left: 5px solid #444; }
.scroll-v, .scroll-h { display: flex; align-items: center; background: #efefef; }
.scroll-v { flex-direction: column; padding: 5px 0; }
.track { flex: 1; display: flex; }
.scroll-v .track { width: 100%; flex-direction: column; }
.scroll-h .track { height: 100%; }
.thumb {
  display: flex;
  align-items: center;
  justify-content: center;
  border: 1px solid #999;
  border-radius: 2px;
  background: linear-gradient(#f4f4f4, #dedede 45%, #cbcbcb 55%, #d9d9d9);
}
.scroll-v .thumb { background: linear-gradient(90deg, #f4f4f4, #dedede 45%, #cbcbcb 55%, #d9d9d9); }
.thumb s { width: 9px; height: 9px; background: repeating-linear-gradient(#666 0 1px, transparent 1px 4px); }
.scroll-h .thumb s { background: repeating-linear-gradient(90deg, #666 0 1px, transparent 1px 4px); }
.canvas-scroll-v { padding-bottom: 8px; }
.canvas-scroll-v .track { padding-top: 267px; }
.canvas-scroll-v .thumb { height: 306px; }
.canvas-scroll-h { padding: 0 8px 2px; }
.canvas-scroll-h .track { padding-left: 152px; }
.canvas-scroll-h .thumb { width: 960px; }
.dock-scroll { width: 19px; margin-left: 6px; padding: 7px 0; }
.dock-scroll .track { padding-top: 10px; }
.dock-scroll .thumb { height: 724px; }

/* dock */
.dock {
  width: 380px;
  border-left: 2px solid #111;
  border-top: 1px solid #111;
  margin-top: 1px;
  overflow: hidden;
}
.dock-title {
  height: 23px;
  display: flex;
  align-items: center;
  border-bottom: 1px solid #999;
}
.dock-title > svg { width: 14px; height: 16px; }
.dock-title span { flex: 1; white-space: nowrap; }
.dock-title span, .dock-tabs span, .check, .entry, .latin, .scale { font-size: 16px; }
.dock-title button { width: 22px; padding-left: 6px; }
.dock-title button svg { width: 12px; height: 12px; }
.export { padding: 6px 4px 0 8px; }
.area-buttons {
  display: grid;
  grid-template-columns: repeat(4, 1fr);
  gap: 2px;
  margin: 7px 3px 7px 0;
}
.area-buttons button, .btn {
  height: 28px;
  border: 1px solid #808080;
  border-radius: 3px;
  background: linear-gradient(#fafafa, #ececec 48%, #dadada 52%, #d6d6d6);
}
.area-buttons .active, .dock-tabs .active {
  border-color: #33607e;
  background: linear-gradient(#d3ecf6, #b7deee 48%, #8cc6e0 52%, #78b6d4);
}
.area-grid {
  display: grid;
  grid-template-columns: 85px 82px 104px 82px;
  row-gap: 4px;
}
.area-grid label { align-self: center; text-align: center; padding-right: 14px; }
.area-grid .spin + label { padding-right: 0; }
.area-grid .spin + label:nth-of-type(3), .area-grid .spin + label:nth-of-type(5) { padding-right: 14px; }
.unit-row {
  display: flex;
  justify-content: flex-end;
  align-items: center;
  gap: 3px;
  margin: 3px 2px 5px;
}
.size-grid {
  display: grid;
  grid-template-columns: 63px 82px 58px 82px 1fr;
  row-gap: 4px;
  align-items: center;
  margin: 3px 0 5px;
  white-space: nowrap;
}
.size-grid label + .spin + label { text-align: center; }
.size-grid > span:not(.spin) { padding-left: 4px; }
.size-grid .dim { text-align: center; }
.file-row { display: flex; gap: 10px; margin: 4px 7px 4px 0; }
.entry { flex: 1; min-width: 0; height: 28px; padding: 0 3px; border: 1px solid #a8a8a8; background: #fff; }
.btn { display: flex; align-items: center; gap: 4px; padding: 0 3px; white-space: nowrap; }
.btn svg { width: 18px; height: 18px; }
.check { display: flex; align-items: center; gap: 5px; height: 24px; }
.check input {
  width: 13px;
  height: 13px;
  appearance: none;
  border: 1px solid #999;
  background: linear-gradient(135deg, #dcdcdc, #fff);
}
.check input:disabled { border-color: #bbb; background: #f6f6f6; }
.progress {
  height: 18px;
  margin-left: -3px;
  border: 1px solid #999;
  border-radius: 2px;
  background: linear-gradient(#d8d8d8, #c6c6c6 60%, #dedede);
}
.finish-row { display: flex; align-items: center; justify-content: space-between; margin: 4px 4px 12px 2px; }
.dock-tabs { display: flex; flex-direction: column; gap: 4px; padding: 0 0 0 2px; }
.dock-tabs button {
  height: 24px;
  padding: 0 5px 0 2px;
  display: flex;
  align-items: center;
  gap: 2px;
  text-align: left;
  border: 1px solid #808080;
  border-radius: 2px;
  background: linear-gradient(#fafafa, #ececec 48%, #dadada 52%, #d6d6d6);
}
.dock-tabs svg { width: 14px; height: 16px; }
.dock-tabs span { flex: 1; }
.second { margin-top: 9px; }
.fill-stroke { padding: 5px 3px 0 5px; }
.tabs { display: flex; align-items: flex-end; height: 29px; }
.tabs button {
  height: 27px;
  padding: 0 5px 0 1px;
  display: flex;
  align-items: center;
  gap: 3px;
  border: 1px solid #8a8a8a;
  border-bottom: 0;
  background: linear-gradient(#f2f2f2, #e6e6e6 50%, #d4d4d4);
}
.tabs .current { z-index: 1; height: 30px; margin-bottom: -1px; padding: 0 7px 3px 4px; background: #fff; }
.tabs svg { width: 11px; height: 11px; }
.tab-page { height: 212px; border: 1px solid #8a8a8a; padding: 12px 8px; background: #fff; }
.paint-row { display: flex; align-items: center; gap: 10px; padding-left: 4px; margin-bottom: 12px; }
.paint-row button { width: 20px; height: 20px; }
.paint-row .unknown { font: 700 24px/20px "Open Sans", sans-serif; }
.paint-row .rule { width: 10px; }
.paint-row .rule svg { width: 10px; height: 12px; }
.unknown + .rule { margin-left: auto; }
.rule:last-child { margin-right: 3px; }
.scale { display: flex; height: 28px; margin-top: 4px; }
.bar {
  flex: 1;
  display: flex;
  align-items: center;
  padding: 0 4px;
  border: 1px solid #a8a8a8;
}
.bar input { flex: 1; min-width: 0; padding: 0; border: 0; background: none; text-align: right; }
.bar input:disabled { color: #858585; }
.filled { background: linear-gradient(90deg, #b6c4d2 336px, #111 336px 337px, #f4f4f4 337px); border-bottom: 2px solid #333; }
.third { margin-top: 11px; }

/* icon bars */
.iconbar {
  padding-top: 2px;
  display: flex;
  flex-direction: column;
  align-items: center;
  background: linear-gradient(#f2f2fa, #d5daeb 18px);
}
.iconbar button {
  width: 26px;
  height: 26px;
  display: flex;
  align-items: center;
  justify-content: center;
}
.iconbar svg { width: 18px; height: 18px; }
.commands { width: 29px; margin-left: 2px; }
.snaps { width: 31px; padding-right: 1px; border-left: 2px solid #f2f3f9; }
.hsep { width: 16px; height: 2px; margin: 5px 0; border-top: 1px solid #b9bfce; border-bottom: 1px solid #fff; }

/* palette */
.palette {
  height: 17px;
  margin-right: 16px;
  padding-left: 2px;
  display: flex;
  overflow: hidden;
  border-top: 2px solid #111;
}
.palette button { flex: none; width: 14px; height: 15px; }
.palette-scroll { height: 14px; margin-top: 3px; padding: 0 12px 0 7px; }
.palette-scroll .track { padding-left: 11px; }
.palette-scroll .thumb { width: 540px; }

/* status bar */
.status { height: 39px; display: flex; align-items: center; }
.style-grid {
  width: 124px;
  padding-left: 2px;
  display: grid;
  grid-template-columns: 56px 1fr;
  font-size: 13px;
  line-height: 19px;
}
.status > label { margin-right: 1px; font-size: 14px; }
.status .spin { width: 48px; }
.status .vsep { height: 37px; margin: 0 2px; }
.mini { width: 15px; }
.mini svg { width: 12px; height: 12px; }
.combo.layer { width: 96px; height: 37px; font-size: 13px; font-weight: 700; }
.message { flex: 1; padding-left: 6px; }
.coords {
  width: 80px;
  height: 34px;
  padding-left: 3px;
  border-left: 1px solid #999;
  display: grid;
  grid-template-columns: 24px 1fr;
  font: 13px/17px "Liberation Mono", monospace;
}
.zoom-label { font-family: "Liberation Mono", monospace; }
.status .zoom { width: 55px; margin-right: 19px; }
.zoom input { font: 13px "Liberation Mono", monospace; text-align: right; }

/* captions laid over the recording */
.captions {
  position: absolute;
  right: 27px;
  bottom: 7px;
  text-align: right;
  font-family: "Noto Sans", "Noto Sans CJK SC", sans-serif;
  font-size: 57px;
  line-height: 69px;
  color: #fff;
  -webkit-text-stroke: 5px #1f89b5;
  paint-order: stroke fill;
  white-space: nowrap;
  pointer-events: none;
}
.captions p { margin: 0; }
.captions .software { font-size: 55px; }
.colon { font-family: "Noto Sans CJK TC", sans-serif; }
```

FILE: script.js
```js
const SVG = 'http://www.w3.org/2000/svg';
const SCALE = 0.7013; // zoom, screen px per user unit

function add(parent, tag, attrs, text) {
  const el = document.createElementNS(SVG, tag);
  for (const key in attrs) el.setAttribute(key, attrs[key]);
  if (text !== undefined) el.textContent = text;
  parent.appendChild(el);
}

// Horizontal ruler, origin = x of user 0
function drawTop(svg, origin) {
  const w = svg.clientWidth;
  let d = 'M3 17.5h' + w;
  for (let u = -550; u <= 1300; u += 25) {
    const x = Math.round(origin + u * SCALE);
    if (x < 3 || x > w) continue;
    const len = u % 250 === 0 ? 15 : (u % 50 === 0 ? 7 : 4);
    d += 'M' + (x + 0.5) + ' 17v-' + len;
    if (u % 250 === 0) add(svg, 'text', { x: x + 2, y: 14 }, u);
  }
  add(svg, 'path', { d: d, stroke: '#000', fill: 'none' });
  add(svg, 'path', { d: 'M531 12h8l-4 5z' });
}

// Vertical ruler, digits stacked
function drawLeft(svg, origin) {
  const h = svg.clientHeight;
  let d = 'M18.5 3V' + (h - 3);
  for (let u = -100; u <= 1200; u += 25) {
    const y = Math.round(origin - u * SCALE);
    if (y < 3 || y > h) continue;
    const len = u % 250 === 0 ? 14 : (u % 50 === 0 ? 7 : 4);
    d += 'M18 ' + (y + 0.5) + 'h-' + len;
    if (u % 250 === 0) {
      String(u).split('').forEach((c, i) => add(svg, 'text', { x: 7, y: y + 11 + i * 10 }, c));
    }
  }
  add(svg, 'path', { d: d, stroke: '#000', fill: 'none' });
  add(svg, 'path', { d: 'M13 326v8l5-4z' });
}

drawTop(document.getElementById('ruler-h'), 395);
drawLeft(document.getElementById('ruler-v'), 814);

const colors = [
  '000000 1a1a1a 333333 4d4d4d 666666 808080 999999 b3b3b3 cccccc e6e6e6 ececec f2f2f2 f9f9f9 ffffff',
  '780008 ee0010 808a08 ffff00 009400 10ff10 108a80 10ffff 00007c 0000ff 78007c f000f0',
  '280000 480000 700000 980000 c00000 e60000 f01030 f04058 f87080 f8a0a8 f8d0d4',
  '280a0e 451018 701626 97202f b8283c cc5566 dd8890 e9a9b0 f4d3d5',
  '241c1c 453539 6c5058 8c6c74 a89096 c4b4b8 e0d9da',
  '2b1100 501c00 782c00 a03c04 c84a04 f45c08 fa742a fb9050 fcae7a fdc8a4 fee6d5',
  '28170b 4a2a16 704024 98542c c06838 cc8458 d8a280 e6c2a8 f2e0d4',
  '241f20 443e3e 685a54 8c7a6c a89a90 c4bcb8 e2dedc',
  '242200 484400 746c08 9c8c08 ccaa10 f4cc08 fcd828 fcdc50 fce47c fcecac fdf4d4',
  '28200b 484016 706424 96842c c0a43c ccb45c d8c684 e6d8ac f2ead4',
  '24221c 484438 6c6853 918c6f aca893 c8c5b7 e3e2db',
  '202800 405400 648000 84aa00 a4e000 b4f408 c4fc34 d0fc5c dcfc84 e8fcb0 f4fdd8',
  '1e280b 3c4c16 587424 749c2c 90c03c a4cc5c bcd884 d0e6ac e8f2d4',
  '20241c 44483c 5c6450'
].join(' ').split(' ');

const palette = document.getElementById('palette');
colors.forEach(c => {
  const b = document.createElement('button');
  b.style.background = '#' + c;
  b.setAttribute('aria-label', c);
  palette.appendChild(b);
});
```
